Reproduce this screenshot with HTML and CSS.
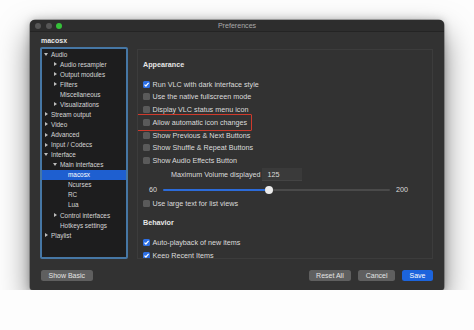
FILE: index.html
```html
<!DOCTYPE html>
<html>
  <head>
    <meta charset="utf-8">
    <meta name="viewport" content="width=device-width, initial-scale=1.0">
    <title>Preferences</title>
    <link rel="stylesheet" href="styles.css">
  </head>
  <body>
    <div class="window">
      <!-- Title bar with traffic lights -->
      <div class="titlebar">
        <div class="lights">
          <span class="light"></span>
          <span class="light"></span>
          <span class="light zoom"></span>
        </div>
        <div class="title">Preferences</div>
        <div></div>
      </div>

      <div class="body">
        <div class="heading">macosx</div>

        <div class="main">
          <!-- Category tree -->
          <div class="tree">
            <div class="node l0"><span class="tri down"></span>Audio</div>
            <div class="node l1"><span class="tri right"></span>Audio resampler</div>
            <div class="node l1"><span class="tri right"></span>Output modules</div>
            <div class="node l1"><span class="tri right"></span>Filters</div>
            <div class="node l1"><span class="tri"></span>Miscellaneous</div>
            <div class="node l1"><span class="tri right"></span>Visualizations</div>
            <div class="node l0"><span class="tri right"></span>Stream output</div>
            <div class="node l0"><span class="tri right"></span>Video</div>
            <div class="node l0"><span class="tri right"></span>Advanced</div>
            <div class="node l0"><span class="tri right"></span>Input / Codecs</div>
            <div class="node l0"><span class="tri down"></span>Interface</div>
            <div class="node l1"><span class="tri down"></span>Main interfaces</div>
            <div class="node l2 selected"><span class="tri"></span>macosx</div>
            <div class="node l2"><span class="tri"></span>Ncurses</div>
            <div class="node l2"><span class="tri"></span>RC</div>
            <div class="node l2"><span class="tri"></span>Lua</div>
            <div class="node l1"><span class="tri right"></span>Control interfaces</div>
            <div class="node l1"><span class="tri"></span>Hotkeys settings</div>
            <div class="node l0"><span class="tri right"></span>Playlist</div>
          </div>

          <!-- Settings panel -->
          <div class="panel">
            <div class="section-title first">Appearance</div>

            <div class="check"><span class="box on"><svg viewBox="0 0 7 7"><path d="M1.5 3.6 L2.9 5 L5.6 1.8"/></svg></span>Run VLC with dark interface style</div>
            <div class="check"><span class="box"></span>Use the native fullscreen mode</div>
            <div class="check"><span class="box"></span>Display VLC status menu icon</div>
            <div class="check marked"><span class="box"></span>Allow automatic icon changes</div>
            <div class="check"><span class="box"></span>Show Previous &amp; Next Buttons</div>
            <div class="check"><span class="box"></span>Show Shuffle &amp; Repeat Buttons</div>
            <div class="check"><span class="box"></span>Show Audio Effects Button</div>

            <div class="volume">
              <span>Maximum Volume displayed</span>
              <span class="field">125</span>
            </div>

            <div class="slider">
              <span>60</span>
              <div class="track">
                <span class="fill"></span>
                <span class="thumb"></span>
                <span class="rest"></span>
              </div>
              <span>200</span>
            </div>

            <div class="check large"><span class="box"></span>Use large text for list views</div>

            <div class="section-title second">Behavior</div>

            <div class="check"><span class="box on"><svg viewBox="0 0 7 7"><path d="M1.5 3.6 L2.9 5 L5.6 1.8"/></svg></span>Auto-playback of new items</div>
            <div class="check"><span class="box on"><svg viewBox="0 0 7 7"><path d="M1.5 3.6 L2.9 5 L5.6 1.8"/></svg></span>Keep Recent Items</div>
          </div>
        </div>

        <!-- Bottom buttons -->
        <div class="footer">
          <button>Show Basic</button>
          <span class="spacer"></span>
          <button>Reset All</button>
          <button>Cancel</button>
          <button class="primary">Save</button>
        </div>
      </div>
    </div>
  </body>
</html>
```

FILE: styles.css
```css
/* Page and window frame */
body {
  margin: 0;
  background: #fdfdfd;
  font-family: "Liberation Sans", Arial, sans-serif;
}
.window {
  width: 414px;
  height: 270px;
  margin: 20px 0 0 30px;
  background: #323232;
  border-radius: 5px 5px 3px 3px;
  box-shadow: 0 14px 30px rgba(0,0,0,0.5), 0 0 8px rgba(0,0,0,0.25), 0 0 0 0.5px rgba(0,0,0,0.5);
  overflow: hidden;
}
/* Title bar: lights on the left, title centered */
.titlebar {
  height: 12px;
  box-sizing: border-box;
  display: grid;
  grid-template-columns: 1fr auto 1fr;
  align-items: center;
  background: #2d2d2d;
  border-bottom: 1px solid #242424;
}
.lights {
  display: flex;
  gap: 4.5px;
  padding-left: 5px;
}
.light {
  width: 6px;
  height: 6px;
  border-radius: 50%;
  background: #565656;
}
.light.zoom {
  background: #36c13a;
}
.title {
  font-size: 7.1px;
  color: #a9a9a9;
}
.body {
  padding: 0 11px 0 10px;
}
.heading {
  margin-top: 4px;
  height: 10px;
  line-height: 10px;
  font-size: 7px;
  font-weight: bold;
  color: #e8e8e8;
  padding-left: 1px;
}
.main {
  display: flex;
  gap: 9px;
  align-items: flex-start;
  margin-top: 1px;
}
/* Category tree on the left */
.tree {
  width: 88px;
  height: 212px;
  box-sizing: border-box;
  flex: none;
  border: 2px solid #4677a5;
  border-radius: 2px;
  background: #1d1d1e;
  font-size: 6.4px;
  color: #d6d6d6;
}
.node {
  height: 10.07px;
  display: flex;
  align-items: center;
  white-space: nowrap;
}
.l0 { padding-left: 2px; }
.l1 { padding-left: 11px; }
.l2 { padding-left: 19px; }
.node.selected {
  background: #1e5fd0;
  color: #fff;
}
.tri {
  width: 7px;
  flex: none;
  display: flex;
  align-items: center;
}
.tri.down::before {
  content: "";
  border-left: 2px solid transparent;
  border-right: 2px solid transparent;
  border-top: 3px solid #bdbdbd;
}
.tri.right::before {
  content: "";
  margin-left: 1px;
  border-top: 2px solid transparent;
  border-bottom: 2px solid transparent;
  border-left: 3px solid #bdbdbd;
}
/* Settings panel */
.panel {
  flex: 1;
  height: 210px;
  margin-top: 2px;
  box-sizing: border-box;
  border: 1px solid #3c3c3c;
  padding-left: 5px;
  overflow: hidden;
  font-size: 7.2px;
  color: #dcdcdc;
}
.section-title {
  height: 12px;
  line-height: 12px;
  font-weight: bold;
  color: #e6e6e6;
}
.section-title.first {
  margin-top: 8.5px;
  margin-bottom: 7.45px;
}
.section-title.second {
  margin-top: 6.65px;
  margin-bottom: 7.65px;
}
.check {
  height: 12.7px;
  width: fit-content;
  display: flex;
  align-items: center;
  gap: 2.5px;
  white-space: nowrap;
}
.check.large {
  margin-top: 1.65px;
}
.box {
  width: 7px;
  height: 7px;
  flex: none;
  border-radius: 1.5px;
  background: #5a5a5a;
}
.box.on {
  background: #2d6fe3;
}
.box svg {
  display: block;
  width: 7px;
  height: 7px;
  fill: none;
  stroke: #fff;
  stroke-width: 1.2;
}
/* Red annotation box drawn over one row */
.check.marked {
  position: relative;
}
.check.marked::after {
  content: "";
  position: absolute;
  top: -2px;
  bottom: -2px;
  left: -6px;
  right: -5px;
  border: 1.5px solid #cf3a2c;
  border-radius: 1px;
}
.volume {
  margin-top: 1.15px;
  height: 13px;
  display: flex;
  align-items: center;
  padding-left: 28px;
}
.field {
  margin-left: 2px;
  width: 40px;
  height: 13px;
  line-height: 13px;
  box-sizing: border-box;
  padding-left: 5px;
  background: #3a3a3a;
  border-bottom: 1px solid #444;
}
.slider {
  margin-top: 3px;
  height: 12px;
  display: flex;
  align-items: center;
  padding-left: 6px;
  gap: 6px;
}
.track {
  width: 227px;
  display: flex;
  align-items: center;
}
.fill {
  width: 102px;
  height: 2px;
  background: #2c6bd8;
  border-radius: 1px 0 0 1px;
}
.thumb {
  width: 8px;
  height: 8px;
  flex: none;
  border-radius: 50%;
  background: #ececec;
}
.rest {
  flex: 1;
  height: 2px;
  background: #4a4a4a;
  border-radius: 0 1px 1px 0;
}
/* Footer buttons */
.footer {
  display: flex;
  gap: 7px;
  padding: 10.5px 0 0 1px;
}
.spacer {
  flex: 1;
}
button {
  height: 11px;
  line-height: 11px;
  padding: 0 7.5px;
  border: none;
  border-radius: 2.5px;
  background: #5f5f5f;
  color: #e4e4e4;
  font-family: "Liberation Sans", Arial, sans-serif;
  font-size: 7px;
}
button.primary {
  background: #1c64dc;
  color: #fff;
}
```
